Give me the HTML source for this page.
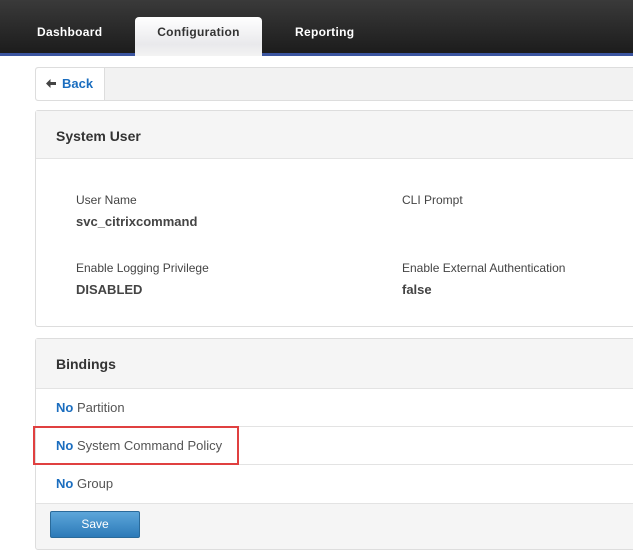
<!DOCTYPE html><html><head><style>
body{margin:0;width:633px;height:543px;overflow:hidden;background:#fff;font-family:"Liberation Sans",sans-serif;position:relative}
.nav{position:absolute;left:0;top:0;width:633px;height:53px;background:linear-gradient(#3a3a3a,#1c1c1c);border-bottom:3px solid #3b55a0}
.t{position:absolute;top:25px;font-size:12px;font-weight:bold;color:#fff;letter-spacing:.3px}
.act{position:absolute;left:135px;top:17px;width:127px;height:39px;background:linear-gradient(#fff,#e9e9ec 70%,#f3f3f3);border-radius:4px 4px 0 0;color:#333;font-size:12px;font-weight:bold;text-align:center;line-height:30px;letter-spacing:.3px}
.bar{position:absolute;left:35px;top:67px;width:600px;height:32px;background:#f2f2f2;border:1px solid #ddd;border-radius:3px}
.back{position:absolute;left:0;top:0;width:68px;height:32px;background:#fff;border-right:1px solid #ddd;border-radius:3px 0 0 3px;color:#1a6dbf;font-weight:bold;font-size:13px;line-height:32px}
.p{position:absolute;left:35px;width:600px;border:1px solid #ddd;border-radius:3px;background:#fff}
.h{background:#f5f5f5;border-bottom:1px solid #e3e3e3;font-weight:bold;font-size:14px;color:#333;padding-left:20px}
.l{position:absolute;font-size:12px;color:#444}
.v{position:absolute;font-size:13px;font-weight:bold;color:#444}
.r{height:37px;border-bottom:1px solid #e3e3e3;font-size:13px;color:#555;line-height:38px;padding-left:20px}
.r b{color:#1a6dbf}
</style></head><body>
<div class="nav"><span class="t" style="left:37px">Dashboard</span><span class="t" style="left:295px">Reporting</span></div>
<div class="act">Configuration</div>
<div class="bar"><div class="back"><svg style="position:absolute;left:10px;top:11px" width="10" height="9" viewBox="0 0 10 9"><path d="M0 4.5L4.5 0V3H10V6H4.5V9Z" fill="#444"/></svg><span style="position:absolute;left:26px;top:0">Back</span></div></div>
<div class="p" style="top:110px;height:215px"><div class="h" style="height:47px;line-height:50px">System User</div>
<span class="l" style="left:40px;top:82px">User Name</span><span class="v" style="left:40px;top:103px">svc_citrixcommand</span>
<span class="l" style="left:366px;top:82px">CLI Prompt</span>
<span class="l" style="left:40px;top:150px">Enable Logging Privilege</span><span class="v" style="left:40px;top:171px">DISABLED</span>
<span class="l" style="left:366px;top:150px">Enable External Authentication</span><span class="v" style="left:366px;top:171px">false</span>
</div>
<div class="p" style="top:338px;height:210px;background:#f5f5f5"><div class="h" style="height:49px;line-height:50px">Bindings</div>
<div style="background:#fff"><div class="r"><b>No</b> Partition</div><div class="r"><b>No</b> System Command Policy</div><div class="r" style="height:38px"><b>No</b> Group</div></div>
</div>
<div style="position:absolute;left:33px;top:426px;width:202px;height:35px;border:2px solid #e04040"></div>
<div style="position:absolute;left:50px;top:511px;width:88px;height:25px;border:1px solid #2a6a9a;border-radius:2px;background:linear-gradient(#5da6da,#2c7ab8);color:#fff;font-size:12px;text-align:center;line-height:25px">Save</div>
</body></html>
